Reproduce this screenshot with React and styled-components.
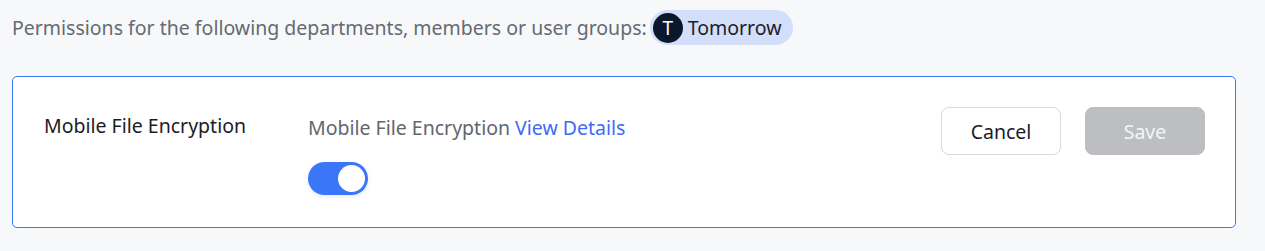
import React, { useState } from "react";
import styled, { createGlobalStyle } from "styled-components";

const GlobalStyle = createGlobalStyle`
  html, body {
    margin: 0;
    padding: 0;
    background: #f7f8fa;
    font-family: "Noto Sans", Lato, sans-serif;
  }
`;

const Page = styled.div`
  padding: 10px 29px 0 12px;
`;

const Header = styled.div`
  display: flex;
  align-items: center;
  gap: 3px;
  height: 35px;
  font-size: 19.5px;
  color: #656a72;
`;

const Chip = styled.span`
  display: inline-flex;
  align-items: center;
  gap: 5px;
  height: 35px;
  padding: 0 12px 0 3px;
  box-sizing: border-box;
  border-radius: 18px;
  background: #d3defb;
  color: #1b1d2a;
  font-size: 19.5px;
`;

const Avatar = styled.span`
  width: 30px;
  height: 30px;
  border-radius: 50%;
  background: #0b172b;
  color: #fff;
  display: inline-flex;
  align-items: center;
  justify-content: center;
  font-size: 19px;
`;

const Card = styled.div`
  margin-top: 31px;
  height: 152px;
  box-sizing: border-box;
  border: 1px solid #3a78f6;
  border-radius: 5px;
  background: #fff;
  display: grid;
  grid-template-columns: 264px 1fr auto;
  padding: 30px 30px 0 31px;
`;

const Label = styled.div`
  font-size: 19.5px;
  line-height: 26px;
  color: #1c1c1f;
  padding-top: 6px;
`;

const Setting = styled.div`
  display: flex;
  flex-direction: column;
  gap: 21px;
  padding-top: 8px;
`;

const Description = styled.div`
  font-size: 19.5px;
  line-height: 26px;
  color: #62666d;
`;

const Link = styled.a`
  color: #3d6bf5;
  text-decoration: none;
  cursor: pointer;
`;

const Toggle = styled.button`
  position: relative;
  width: 60px;
  height: 33px;
  border: none;
  padding: 0;
  border-radius: 17px;
  background: ${(p) => (p.$on ? "#3a76f7" : "#c5c8ce")};
  cursor: pointer;
  box-shadow: 0 2px 4px rgba(58, 118, 247, 0.15);
`;

const Knob = styled.span`
  position: absolute;
  top: 3px;
  left: ${(p) => (p.$on ? "30px" : "3px")};
  width: 27px;
  height: 27px;
  border-radius: 50%;
  background: #fff;
`;

const Actions = styled.div`
  display: flex;
  gap: 24px;
  align-items: flex-start;
`;

const Button = styled.button`
  width: 120px;
  height: 48px;
  box-sizing: border-box;
  border-radius: 8px;
  font-family: inherit;
  font-size: 19.5px;
  border: 1px solid ${(p) => (p.$primary ? "#bcbec2" : "#d9dadd")};
  background: ${(p) => (p.$primary ? "#bcbec2" : "#fff")};
  color: ${(p) => (p.$primary ? "#f4f5f7" : "#1b1d2a")};
  cursor: ${(p) => (p.$primary ? "not-allowed" : "pointer")};
`;

export default function App() {
  const [on, setOn] = useState(true);
  return (
    <Page>
      <GlobalStyle />
      <Header>
        Permissions for the following departments, members or user groups:
        <Chip>
          <Avatar>T</Avatar>
          Tomorrow
        </Chip>
      </Header>
      <Card>
        <Label>Mobile File Encryption</Label>
        <Setting>
          <Description>
            Mobile File Encryption <Link>View Details</Link>
          </Description>
          <Toggle $on={on} onClick={() => setOn(!on)}>
            <Knob $on={on} />
          </Toggle>
        </Setting>
        <Actions>
          <Button>Cancel</Button>
          <Button $primary disabled>
            Save
          </Button>
        </Actions>
      </Card>
    </Page>
  );
}
